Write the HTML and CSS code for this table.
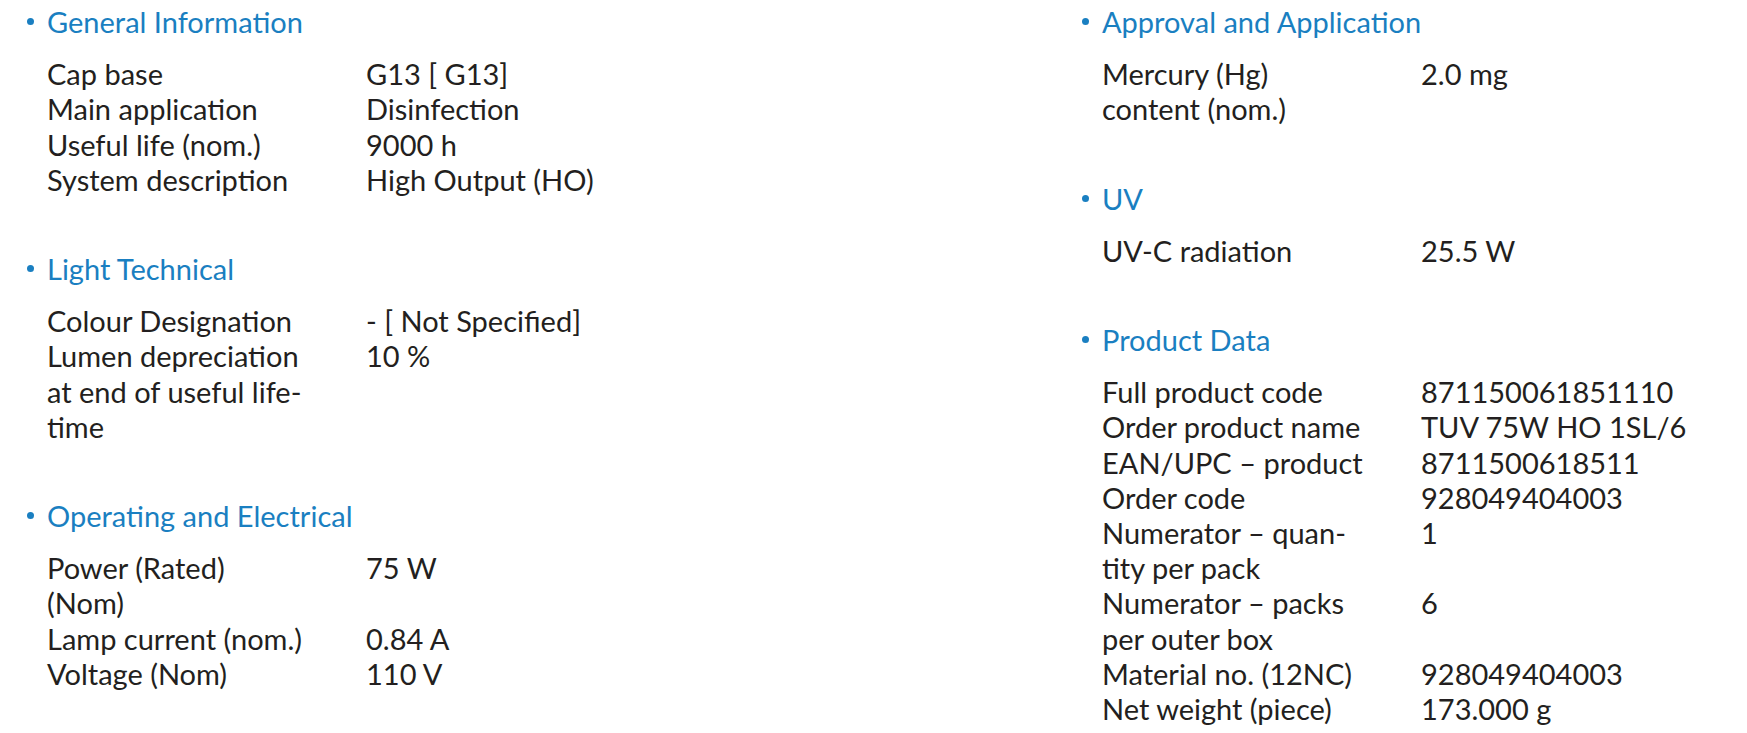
FILE: index.html
```html
<!DOCTYPE html>
<html>
<head>
<meta charset="utf-8">
<link rel="stylesheet" href="styles.css">
</head>
<body>
<div class="page">
  <div class="col">
    <section class="sec">
      <h2 class="head"><span class="dot"></span>General Information</h2>
      <div class="rows">
        <div class="lbl">Cap base</div><div class="val">G13 [ G13]</div>
        <div class="lbl">Main application</div><div class="val">Disinfection</div>
        <div class="lbl">Useful life (nom.)</div><div class="val">9000 h</div>
        <div class="lbl">System description</div><div class="val">High Output (HO)</div>
      </div>
    </section>
    <section class="sec">
      <h2 class="head"><span class="dot"></span>Light Technical</h2>
      <div class="rows">
        <div class="lbl">Colour Designation</div><div class="val">- [ Not Specified]</div>
        <div class="lbl">Lumen depreciation<br>at end of useful life-<br>time</div><div class="val">10 %</div>
      </div>
    </section>
    <section class="sec">
      <h2 class="head"><span class="dot"></span>Operating and Electrical</h2>
      <div class="rows">
        <div class="lbl">Power (Rated)<br>(Nom)</div><div class="val">75 W</div>
        <div class="lbl">Lamp current (nom.)</div><div class="val">0.84 A</div>
        <div class="lbl">Voltage (Nom)</div><div class="val">110 V</div>
      </div>
    </section>
  </div>
  <div class="col">
    <section class="sec">
      <h2 class="head"><span class="dot"></span>Approval and Application</h2>
      <div class="rows">
        <div class="lbl">Mercury (Hg)<br>content (nom.)</div><div class="val">2.0 mg</div>
      </div>
    </section>
    <section class="sec">
      <h2 class="head"><span class="dot"></span>UV</h2>
      <div class="rows">
        <div class="lbl">UV-C radiation</div><div class="val">25.5 W</div>
      </div>
    </section>
    <section class="sec">
      <h2 class="head"><span class="dot"></span>Product Data</h2>
      <div class="rows">
        <div class="lbl">Full product code</div><div class="val">871150061851110</div>
        <div class="lbl">Order product name</div><div class="val">TUV 75W HO 1SL/6</div>
        <div class="lbl">EAN/UPC – product</div><div class="val">8711500618511</div>
        <div class="lbl">Order code</div><div class="val">928049404003</div>
        <div class="lbl">Numerator – quan-<br>tity per pack</div><div class="val">1</div>
        <div class="lbl">Numerator – packs<br>per outer box</div><div class="val">6</div>
        <div class="lbl">Material no. (12NC)</div><div class="val">928049404003</div>
        <div class="lbl">Net weight (piece)</div><div class="val">173.000 g</div>
      </div>
    </section>
  </div>
</div>
</body>
</html>
```

FILE: styles.css
```css
html, body {
  margin: 0;
  padding: 0;
  background: #ffffff;
}
body {
  font-family: Lato, "Open Sans", sans-serif;
  font-size: 29px;
  line-height: 35.2px;
  color: #231f20;
}
.page {
  display: grid;
  grid-template-columns: 1055px 1fr;
  padding: 4px 0 0 47px;
}
.col {
  display: flex;
  flex-direction: column;
  gap: 54px;
}
.sec {
  display: flex;
  flex-direction: column;
  gap: 17px;
}
.head {
  margin: 0 0 0 -20px;
  font-size: 29px;
  font-weight: 400;
  line-height: 35.2px;
  color: #1a7fc1;
  display: flex;
  align-items: center;
  gap: 13px;
}
.dot {
  width: 7px;
  height: 7px;
  border-radius: 50%;
  background: #1a7fc1;
  flex: none;
}
.rows {
  display: grid;
  grid-template-columns: 319px auto;
  justify-content: start;
}
.lbl, .val {
  white-space: nowrap;
}
```
